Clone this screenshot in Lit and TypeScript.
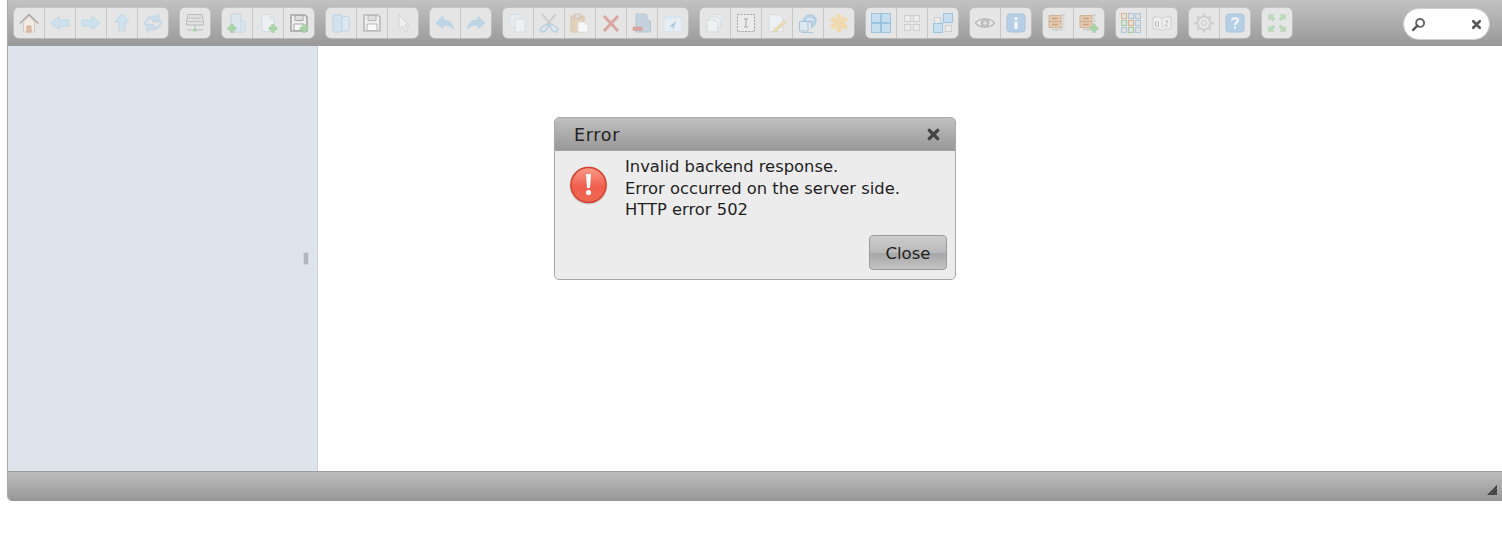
import { LitElement, html, css, svg } from "lit";
import { customElement } from "lit/decorators.js";

const plus = (x = 14.5, y = 15) => svg`<path d="M${x - 1.5} ${y - 4}h3v2.5h2.5v3H${x + 1.5}v2.5h-3v-2.5H${x - 4}v-3h2.5z" fill="#8fcf8f" stroke="#7abb7a" stroke-width=".4"/>`;
const floppy = (c: string) => svg`<path d="M2 2h14l2 2v14H2z" fill="#f2f2f2" stroke="${c}" stroke-width="1.6"/><path d="M6 2.500h8v5H6z" fill="#ddd" stroke="${c}"/><path d="M5 11h10v6.500H5z" fill="#fff" stroke="${c}"/>`;
const folder = svg`<path d="M4 1h9.500l.5 .5V8h3l1 1.500v8l-1 1.500H4z" fill="#d6e5f0" stroke="#b8cede"/><path d="M14 8v11" stroke="#c2d6e5"/>`;
const doc = (s = "#ccd8e0", f = "#f0f4f7") => svg`<path d="M4 1.500h8l4 4v13H4z" fill="${f}" stroke="${s}"/><path d="M12 1.500v4h4" fill="#dfe8ef" stroke="${s}"/>`;
const squares = (cells: [number, number, number, string][]) => cells.map(([x, y, s, c]) => svg`<rect x="${x}" y="${y}" width="${s}" height="${s}" fill="${c === "b" ? "#bcdcf2" : "#eee"}" stroke="${c === "b" ? "#7fb8e0" : "#c4c4c4"}"/>`);
const archiveBox = svg`<path d="M1 2.500h12v12H1z" fill="#e6c09a" stroke="#c9a07a"/><path d="M1 8.500h12" stroke="#bd9470"/><path d="M4 5.500h6M4 11.500h6" stroke="#b98a60" stroke-width="1.300"/><path d="M13 2h4M13 5h3M13 8h4M13 11h3M13 14h4" stroke="#c4c4c4" stroke-width="1.300"/><path d="M4 16.500h11M9 14.500v4" stroke="#c4c4c4" stroke-width="1.300"/>`;

const I: Record<string, any> = {
  home: svg`<path d="M4.500 9v10h11V9l-5.500-5.500z" fill="#f6eee2" stroke="#d2c3b2"/><path d="M.8 10.500 10 1.500l9.200 9" fill="none" stroke="#8f8f8f" stroke-width="1.500"/><path d="M8 13h4v6H8z" fill="#dcae94" stroke="#c69478"/>`,
  back: svg`<path d="M1 10 9 3.500V7h10v6H9v3.500z" fill="#c4e0f2" stroke="#aed2e8"/>`,
  fwd: svg`<path d="M19 10 11 3.500V7H1v6h10v3.500z" fill="#c4e0f2" stroke="#aed2e8"/>`,
  up: svg`<path d="M10 1 3 9h4v9h6V9h4z" fill="#c4e0f2" stroke="#aed2e8"/><path d="M7 16h6v2H7z" fill="#d6dcdf"/>`,
  reload: svg`<path d="M1.500 12C2 5 7 1.500 13 3.500L15.500 .5 17 9l-8-.5 2-2.500C7 5 3.500 7 1.500 12z" fill="#c2d9ec" stroke="#adcadf" stroke-width=".7"/><path d="M18.500 8C18 15 13 18.500 7 16.500L4.500 19.500 3 11l8 .5-2 2.500c4 1 7.500-1 9.500-6z" fill="#c2d9ec" stroke="#adcadf" stroke-width=".7"/>`,
  net: svg`<path d="M3 1.500h14l1.500 6v4.500H1.500V7.500z" fill="#dedede" stroke="#ababab"/><path d="M3 5h14M2.500 8.500h15" stroke="#b2b2b2"/><path d="M10 12v5M2 17h16" stroke="#ababab"/><circle cx="10" cy="17" r="1.800" fill="#8ecd8e"/>`,
  mkdir: svg`${folder}${plus(5, 15.500)}`,
  mkfile: svg`${doc()}${plus(15, 15.500)}`,
  upload: svg`${floppy("#8e8e8e")}${plus(15, 15.500)}`,
  open: svg`<path d="M2 2h9v15.500l-1.500 1.500H3l-1-1z" fill="#c9dff1" stroke="#aecbe2"/><path d="M11 3.500h6l1 1V17l-1 1h-6z" fill="#d9e9f5" stroke="#aecbe2"/>`,
  save: floppy("#a8a8a8"),
  select: svg`<path d="M6 1.500V16l3.500-3 2.500 6 2.500-1-2.500-6H16z" fill="#f2f2f2" stroke="#cbcbcb"/>`,
  undo: svg`<path d="M1 10 8 3.500V7c6 0 10 3 10.500 9-2-3-5-4-10.500-4v3.500z" fill="#aecfe8" stroke="#9cc2df" stroke-width=".7"/>`,
  redo: svg`<path d="M19 10 12 3.500V7C6 7 2 10 1.500 16c2-3 5-4 10.500-4v3.500z" fill="#aecfe8" stroke="#9cc2df" stroke-width=".7"/>`,
  copy: svg`<path d="M2 1.500h8l3 3v10H2z" fill="#eaeff3" stroke="#d2dde4"/><path d="M7 6h7l3 3v10H7z" fill="#f0f4f7" stroke="#ccd8e0"/>`,
  cut: svg`<path d="M3 1 12.500 12M17 1 7.500 12" stroke="#c6c6c6" stroke-width="2.200"/><path d="M8 11.500C6 12 2 14 1 17c1 2.500 4 2 5.500 .5 1.500-1.500 2.500-3.500 3-5.500zM12 11.500c2 .5 6 2.500 7 5.500-1 2.500-4 2-5.500 .5-1.500-1.500-2.500-3.500-3-5.500z" fill="none" stroke="#a9cbe0" stroke-width="1.800"/>`,
  paste: svg`<path d="M1 3h13v16H1z" fill="#e3c9ab" stroke="#d3b594"/><path d="M4.500 1h6v4h-6z" fill="#dcdcd4" stroke="#c0b3a1"/><path d="M8 9h6l4 3.500V19H8z" fill="#fff" stroke="#ddd"/>`,
  rm: svg`<path d="M3 3 17 18M17 3 3 18" stroke="#d68e8a" stroke-width="3"/>`,
  trash: svg`<path d="M4 1h10l1 1v5.500h2.500l1 1.500v9l-1 1H4z" fill="#b6cbdc" stroke="#a2bacd"/><path d="M1 14h9v3.500H1z" fill="#dd8e84" stroke="#cb786e" stroke-width=".5"/>`,
  thumb: svg`<path d="M1 3.500h18v15H1z" fill="#e6f0f9" stroke="#d3e3ef"/><path d="M1 3.500h18v2H1z" fill="#d3e5f2"/><path d="M13.500 7.500 6.500 13.500l3 .5 .5 2.500z" fill="#9abcd9"/>`,
  dup: svg`<path d="M7 1.500h8l3 3v8h-11z" fill="#e8edf0" stroke="#d5dde2"/><path d="M4.500 4h8l3 3v8h-11z" fill="#edf2f4" stroke="#d0d8de"/><path d="M2 7h8l3 3v9H2z" fill="#f1f5f7" stroke="#ccd5dc"/>`,
  rename: svg`<rect x="1.500" y="1.500" width="17" height="17" fill="#eeeeee" stroke="#8a8a8a" stroke-dasharray="2 1.200"/><path d="M8 6h4M8 14h4M10 6v8" stroke="#8f8f8f"/>`,
  edit: svg`<path d="M2 1.500h10l4 4v13H2z" fill="#f0f4f7" stroke="#d2dbe1"/><path d="M6 19.500l1-3 10-9 2 2-10 9z" fill="#efdaa4" stroke="#d6c088" stroke-width=".7"/>`,
  resize: svg`<path d="M1.500 8.500h8.500v9.500H1.500z" fill="#dce9f3" stroke="#94b9d6"/><path d="M5.500 8C6 3 11 .5 15 2.500c4 2 4 8 .5 10.500l-2 1.500V9z" fill="#abcfe8" stroke="#88b6d8"/><path d="M9 7.500c1-2 5-2 6 0" fill="none" stroke="#e6f0f8" stroke-width="1.500"/><path d="M3 19.500h12" stroke="#94b9d6"/>`,
  extra: svg`<path d="M10 3v14M3.900 6.500l12.200 7M16.100 6.500l-12.200 7" stroke="#f5d59a" stroke-width="5" stroke-linecap="round"/>`,
  icons: squares([[.5, .5, 9, "b"], [10.500, .5, 9, "b"], [.5, 10.500, 9, "b"], [10.500, 10.500, 9, "b"]]),
  list: squares([[2.500, 2.500, 6, "g"], [11.500, 2.500, 6, "g"], [2.500, 11.500, 6, "g"], [11.500, 11.500, 6, "g"]]),
  mix: squares([[1.500, 4.500, 6, "g"], [10.500, .5, 9, "b"], [.5, 10.500, 9, "b"], [12.500, 12.500, 6, "g"]]),
  eye: svg`<path d="M.5 10C5 4.500 15 4.500 19.500 10 15 15.500 5 15.500 .5 10z" fill="#eee" stroke="#a6a6a6" stroke-width="1.300"/><circle cx="10" cy="10" r="4.500" fill="#acacac"/><circle cx="10" cy="10" r="2" fill="#dcdcdc"/>`,
  info: svg`<rect x="1" y="1" width="18" height="18" rx="3" fill="#a3c7e8" stroke="#90b8da"/><circle cx="10" cy="5.500" r="1.500" fill="#fff"/><path d="M8.500 8.500h3v7.500h-3z" fill="#fff"/>`,
  arch: archiveBox,
  archAdd: svg`${archiveBox}${plus(15, 15.500)}`,
  grid: svg`<g stroke-width="1">${[0, 7, 14].flatMap((y, r) => [0, 7, 14].map((x, c) => { const col = [["#d8a878", "#9cbcd8", "#9cbcd8"], ["#8fc48f", "#e0a070", "#9cbcd8"], ["#9cbcd8", "#8fc48f", "#9cbcd8"]][r][c]; return svg`<rect x="${x + .5}" y="${y + .5}" width="5" height="5" fill="#e2e2e2" stroke="${col}" stroke-width="1.200"/>`; }))}</g>`,
  sort: svg`<path d="M1 4h7l2 1.500 2-1.500h7v12h-7l-2 2-2-2H1z" fill="#f2f2f2" stroke="#c6c6c6"/><path d="M10 5.500V15" stroke="#cdcdcd"/><path d="M3.500 9h3v4h-3zM6.500 9v4M13 8h3l-3 5h3" fill="none" stroke="#adadad"/>`,
  gear: svg`<circle cx="10" cy="10" r="6.500" fill="#e8e8e8" stroke="#c6c6c6" stroke-width="2"/><circle cx="10" cy="10" r="2.500" fill="none" stroke="#c6c6c6" stroke-width="1.200"/><path d="M10 .5v3.500M10 16v3.500M.5 10H4M16 10h3.500M3.300 3.300l2.500 2.500M14.200 14.200l2.500 2.500M16.700 3.300l-2.500 2.500M5.800 14.200l-2.500 2.500" stroke="#c6c6c6" stroke-width="2.500"/>`,
  help: svg`<rect x="1" y="1" width="18" height="18" rx="3" fill="#a3c7e8" stroke="#90b8da"/><path d="M7 7.500c0-3 6-3 6 0 0 2-3 2-3 4.500" fill="none" stroke="#fff" stroke-width="2"/><path d="M9 13.500h2v2H9z" fill="#fff"/>`,
  full: svg`<g fill="#a8d6a8" stroke="#97cb97" stroke-width=".4"><path d="M1.500 1.500h5.500L5.500 3 8 6 6 8 3 5.500 1.500 7z"/><path d="M18.500 1.500H13L14.500 3 12 6l2 2 3-2.500L18.500 7z"/><path d="M1.500 18.500H7L5.500 17 8 14l-2-2-3 2.500L1.500 13z"/><path d="M18.500 18.500H13l1.500-1.500L12 14l2-2 3 2.500 1.500-1.500z"/></g>`,
};

const GROUPS = [
  ["home", "back", "fwd", "up", "reload"],
  ["net"],
  ["mkdir", "mkfile", "upload"],
  ["open", "save", "select"],
  ["undo", "redo"],
  ["copy", "cut", "paste", "rm", "trash", "thumb"],
  ["dup", "rename", "edit", "resize", "extra"],
  ["icons", "list", "mix"],
  ["eye", "info"],
  ["arch", "archAdd"],
  ["grid", "sort"],
  ["gear", "help"],
  ["full"],
];

@customElement("app-root")
export class AppRoot extends LitElement {
  static styles = css`
    :host { display: block; position: relative; height: 539px; overflow: hidden; background: #fff;
      font-family: "DejaVu Sans", sans-serif; color: #222; }
    .app { margin-left: 7px; height: 501px; display: flex; flex-direction: column; box-sizing: border-box;
      border-left: 1px solid #a9a9a9; border-bottom-left-radius: 5px; overflow: hidden; }
    .toolbar { height: 46px; flex: none; box-sizing: border-box; padding: 8px 12px 0 6px; display: flex; gap: 12px;
      background: linear-gradient(#c2c2c2, #989898); }
    .group { display: flex; height: 30px; border-radius: 5px; overflow: hidden; background: #e5e5e5; box-shadow: 0 0 0 .5px #cfcfcf; }
    .btn { width: 30px; height: 30px; display: flex; align-items: center; justify-content: center; }
    .btn + .btn { border-left: 1px solid #c6c6c6; }
    .btn svg { width: 20px; height: 20px; display: block; opacity: .72; filter: blur(.25px); }
    .search { margin-left: auto; width: 87px; height: 32px; box-sizing: border-box; background: #fff; border-radius: 16px;
      display: flex; align-items: center; justify-content: space-between; padding: 0 7px 0 7px; border: 1px solid #cfcfcf; }
    .search svg { display: block; }
    .body { flex: 1; display: flex; min-height: 0; }
    .side { width: 310px; flex: none; box-sizing: border-box; background: #dde4ec; border-right: 1px solid #ccd3db;
      display: flex; align-items: center; justify-content: flex-end; padding-right: 8px; }
    .handle { width: 4px; height: 11px; background: #b1b6bc; border: 1px solid #d2d6db; box-sizing: content-box; }
    .main { flex: 1; background: #fff; }
    .status { height: 30px; flex: none; box-sizing: border-box; border-top: 1px solid #9c9c9c; display: flex; justify-content: flex-end; align-items: flex-end;
      background: linear-gradient(#bdbdbd, #969696); padding: 0 4px 5px 0; }
    .dialog { position: absolute; left: 554px; top: 117px; width: 402px; height: 163px; box-sizing: border-box;
      border: 1px solid #a8a8a8; border-radius: 5px; background: #ececec; display: flex; flex-direction: column; overflow: hidden; }
    .head { height: 33px; flex: none; box-sizing: border-box; display: flex; align-items: center; justify-content: space-between;
      padding: 1px 15px 0 19px; background: linear-gradient(#c0c0c0, #989898); border-bottom: 1px solid #a2a2a2; font-size: 17.500px; letter-spacing: .7px; color: #222; }
    .content { flex: 1; display: flex; padding: 5px 8px 8px 14px; gap: 17px; min-height: 0; }
    .msg { font-size: 16.350px; line-height: 21.500px; color: #1f1f1f; }
    .msg div { white-space: nowrap; }
    .alert { flex: none; margin-top: 10px; width: 39px; height: 39px; display: block; }
    .foot { height: 35px; flex: none; display: flex; justify-content: flex-end; padding: 0 8px 9px 0; }
    .close { width: 78px; height: 35px; box-sizing: border-box; border: 1px solid #9a9a9a; border-radius: 4px; font: 16.500px "DejaVu Sans", sans-serif; color: #222;
      padding: 2px 0 0; background: linear-gradient(#cecece, #b9b9b9 50%, #a6a6a6 52%, #c4c4c4); }
  `;

  render() {
    return html`
      <div class="app">
        <div class="toolbar">
          ${GROUPS.map((g) => html`<div class="group">${g.map((n) => html`<div class="btn"><svg viewBox="0 0 20 20">${I[n]}</svg></div>`)}</div>`)}
          <div class="search">
            <svg width="15" height="15" viewBox="0 0 14 14"><circle cx="8.500" cy="5.500" r="3.700" fill="none" stroke="#666" stroke-width="1.800"/><path d="M6 8 2 12" stroke="#555" stroke-width="2.400" stroke-linecap="round"/></svg>
            <svg width="11" height="11" viewBox="0 0 12 12"><path d="M2.500 2.500l7 7M9.500 2.500l-7 7" stroke="#5a5a5a" stroke-width="3" stroke-linecap="round"/></svg>
          </div>
        </div>
        <div class="body">
          <div class="side"><div class="handle"></div></div>
          <div class="main"></div>
        </div>
        <div class="status">
          <svg width="12" height="12" viewBox="0 0 12 12"><path d="M11 1v10H1z" fill="#3e3e3e"/><path d="M4 11 11 4M8 11l3-3" stroke="#8a8a8a" stroke-width=".5"/></svg>
        </div>
      </div>
      <div class="dialog">
        <div class="head">
          <span>Error</span>
          <svg width="13" height="13" viewBox="0 0 14 14"><path d="M2.500 2.500l9 9M11.500 2.500l-9 9" stroke="#444" stroke-width="3.600" stroke-linecap="round"/></svg>
        </div>
        <div class="content">
          <svg class="alert" viewBox="0 0 39 39">
            <defs>
              <linearGradient id="ag" x1="0" y1="0" x2="0" y2="1"><stop offset="0" stop-color="#fb9c8c"/><stop offset=".55" stop-color="#ef5f4c"/><stop offset="1" stop-color="#ec6a54"/></linearGradient>
            </defs>
            <circle cx="19.500" cy="19.500" r="19" fill="#c9cbc9"/>
            <circle cx="19.500" cy="19" r="17.500" fill="url(#ag)" stroke="#d8402f" stroke-width="1.500"/>
            <path d="M17 8h5l-1 14h-3z" fill="#fff"/><circle cx="19.500" cy="26.500" r="2.600" fill="#fff"/>
          </svg>
          <div class="msg">
            <div>Invalid backend response.</div>
            <div>Error occurred on the server side.</div>
            <div>HTTP error 502</div>
          </div>
        </div>
        <div class="foot"><button class="close">Close</button></div>
      </div>
    `;
  }
}
